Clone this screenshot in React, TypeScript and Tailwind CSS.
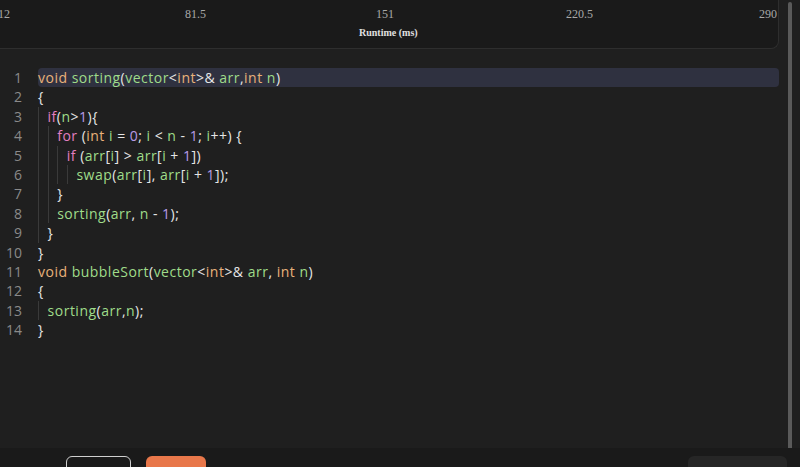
import React from "react";

type Tok = [string, string];
const K = "text-[#e37ec0]"; // if/for
const T = "text-[#e8b27a]"; // types
const F = "text-[#9fdc8a]"; // idents
const N = "text-[#b79ce6]"; // numbers
const P = "text-[#e6e6e6]";

const lines: { indent: number; toks: Tok[] }[] = [
  { indent: 0, toks: [[T, "void"], [P, " "], [F, "sorting"], [P, "("], [F, "vector"], [P, "<"], [T, "int"], [P, ">& "], [F, "arr"], [P, ","], [T, "int"], [P, " "], [F, "n"], [P, ")"]] },
  { indent: 0, toks: [[P, "{"]] },
  { indent: 1, toks: [[K, "if"], [P, "("], [F, "n"], [P, ">"], [N, "1"], [P, "){"]] },
  { indent: 2, toks: [[K, "for"], [P, " ("], [T, "int"], [P, " "], [F, "i"], [P, " = "], [N, "0"], [P, "; "], [F, "i"], [P, " < "], [F, "n"], [P, " - "], [N, "1"], [P, "; "], [F, "i"], [P, "++) {"]] },
  { indent: 3, toks: [[K, "if"], [P, " ("], [F, "arr"], [P, "["], [F, "i"], [P, "] > "], [F, "arr"], [P, "["], [F, "i"], [P, " + "], [N, "1"], [P, "])"]] },
  { indent: 4, toks: [[F, "swap"], [P, "("], [F, "arr"], [P, "["], [F, "i"], [P, "], "], [F, "arr"], [P, "["], [F, "i"], [P, " + "], [N, "1"], [P, "]);"]] },
  { indent: 2, toks: [[P, "}"]] },
  { indent: 2, toks: [[F, "sorting"], [P, "("], [F, "arr"], [P, ", "], [F, "n"], [P, " - "], [N, "1"], [P, ");"]] },
  { indent: 1, toks: [[P, "}"]] },
  { indent: 0, toks: [[P, "}"]] },
  { indent: 0, toks: [[T, "void"], [P, " "], [F, "bubbleSort"], [P, "("], [F, "vector"], [P, "<"], [T, "int"], [P, ">& "], [F, "arr"], [P, ", "], [T, "int"], [P, " "], [F, "n"], [P, ")"]] },
  { indent: 0, toks: [[P, "{"]] },
  { indent: 1, toks: [[F, "sorting"], [P, "("], [F, "arr"], [P, ","], [F, "n"], [P, ");"]] },
  { indent: 0, toks: [[P, "}"]] },
];

const ticks: [string, string][] = [
  ["12", "left-[-2px]"],
  ["81.5", "left-[185px]"],
  ["151", "left-[376px]"],
  ["220.5", "left-[566px]"],
  ["290", "left-[759px]"],
];

export default function App() {
  return (
    <div className="w-[800px] h-[467px] bg-[#1f1f1f] flex flex-col overflow-hidden" style={{ fontFamily: "'Open Sans', sans-serif" }}>
      <div className="flex flex-1 min-h-0">
        <div className="flex-1 flex flex-col min-w-0">
          <div className="h-[49px] bg-[#1a1a1a] border-r border-b border-[#2e2e2e] rounded-br-lg flex flex-col" style={{ fontFamily: "'Liberation Serif', serif" }}>
            <div className="relative h-[20px] text-[12px] text-[#a8a8a8]">
              {ticks.map(([t, c]) => (
                <span key={t} className={`absolute top-[5px] ${c}`}>{t}</span>
              ))}
            </div>
            <div className="text-[10px] font-bold text-[#e0e0e0] mt-[5px] pl-[359px]">Runtime (ms)</div>
          </div>
          <div className="pt-[19px] text-[14px] tracking-[0.035em]">
            {lines.map((l, i) => (
              <div key={i} className="flex h-[19.4px] items-center leading-[19.4px]">
                <div className="w-[22px] text-right text-[#8a8a8a] shrink-0 tracking-normal">{i + 1}</div>
                <div className={`ml-[16px] flex-1 flex h-full ${i === 0 ? "bg-[#2f3140] rounded-sm" : ""}`}>
                  {Array.from({ length: l.indent }).map((_, j) => (
                    <span key={j} className="w-[9.6px] h-full border-l border-[#3a3a3a] shrink-0" />
                  ))}
                  <span className="whitespace-pre">
                    {l.toks.map((t, j) => <span key={j} className={t[0]}>{t[1]}</span>)}
                  </span>
                </div>
              </div>
            ))}
          </div>
        </div>
        <div className="w-[21px] flex justify-center pt-[2px]">
          <div className="w-[4px] h-[450px] bg-[#5a5a5a] rounded-full" />
        </div>
      </div>
      <div className="h-[19px] bg-[#1a1a1a] relative shrink-0">
        <div className="absolute left-[66px] top-[8px] w-[65px] h-[20px] border border-[#d0d0d0] rounded-md" />
        <div className="absolute left-[146px] top-[8px] w-[60px] h-[20px] bg-[#e8774a] rounded-md" />
        <div className="absolute left-[688px] top-[8px] w-[99px] h-[20px] bg-[#262626] rounded-md" />
      </div>
    </div>
  );
}
